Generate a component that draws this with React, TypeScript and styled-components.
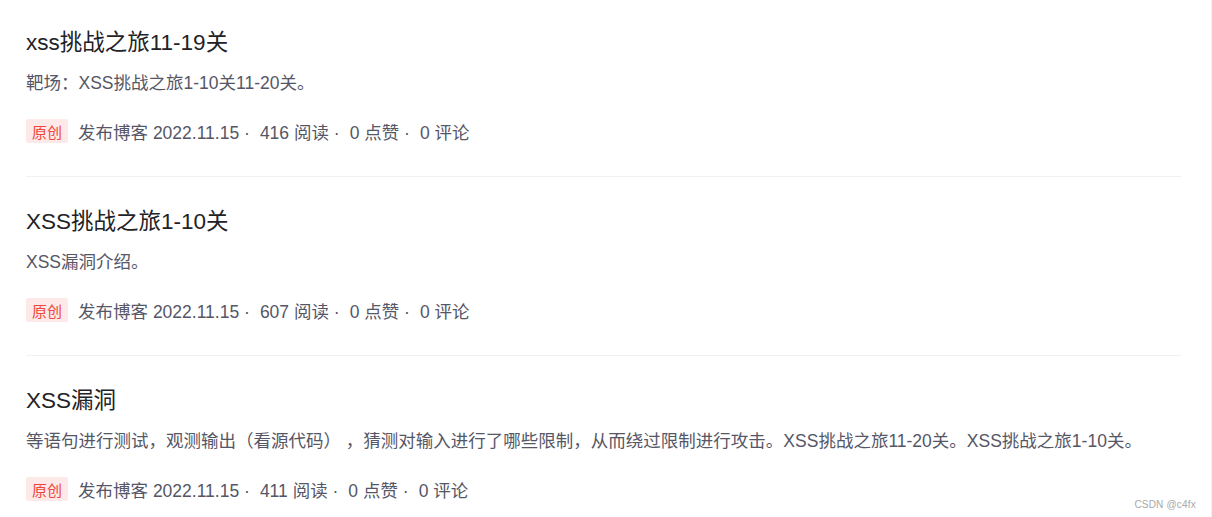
import React from "react";
import styled, { createGlobalStyle } from "styled-components";

const GlobalStyle = createGlobalStyle`
  html, body {
    margin: 0;
    padding: 0;
    background: #fff;
  }
  body {
    font-family: "Liberation Sans", "Noto Sans CJK SC", sans-serif;
  }
`;

const Page = styled.div`
  position: relative;
  box-sizing: border-box;
  width: 1212px;
  height: 517px;
  padding: 0 30px 0 26px;
  border-right: 1px solid #f2f2f2;
  overflow: hidden;
`;

const List = styled.ul`
  list-style: none;
  margin: 0;
  padding: 0;
`;

const Item = styled.li`
  padding: 30px 0 33px;
  border-bottom: 1px solid #f0f0f2;
  &:first-child {
    padding-top: 28px;
  }
  &:last-child {
    border-bottom: none;
  }
`;

const Title = styled.h4`
  margin: 0;
  font-size: 22.5px;
  font-weight: 400;
  line-height: 30px;
  color: #222226;
  white-space: nowrap;
`;

const Desc = styled.p`
  margin: 13px 0 0;
  font-size: 17.5px;
  line-height: 24px;
  color: #555666;
  white-space: nowrap;
  overflow: hidden;
  text-overflow: ellipsis;
`;

const Meta = styled.div`
  display: flex;
  align-items: center;
  margin-top: 24px;
  height: 24px;
  font-size: 17.5px;
  color: #555666;
  white-space: nowrap;
`;

const Badge = styled.span`
  display: inline-flex;
  align-items: center;
  justify-content: center;
  height: 24px;
  padding: 0 6px;
  margin-right: 10px;
  border-radius: 2px;
  background: #fee9e9;
  color: #f0473b;
  font-size: 15px;
`;

const Stat = styled.span`
  margin-right: 10px;
`;

const Watermark = styled.span`
  position: absolute;
  right: 15px;
  bottom: 5px;
  font-size: 10px;
  line-height: 14px;
  color: #a8a8a8;
  letter-spacing: 0.2px;
`;

type Post = {
  title: string;
  desc: string;
  date: string;
  reads: number;
  likes: number;
  comments: number;
};

const posts: Post[] = [
  {
    title: "xss挑战之旅11-19关",
    desc: "靶场：XSS挑战之旅1-10关11-20关。",
    date: "2022.11.15",
    reads: 416,
    likes: 0,
    comments: 0,
  },
  {
    title: "XSS挑战之旅1-10关",
    desc: "XSS漏洞介绍。",
    date: "2022.11.15",
    reads: 607,
    likes: 0,
    comments: 0,
  },
  {
    title: "XSS漏洞",
    desc: "等语句进行测试，观测输出（看源代码） ，猜测对输入进行了哪些限制，从而绕过限制进行攻击。XSS挑战之旅11-20关。XSS挑战之旅1-10关。",
    date: "2022.11.15",
    reads: 411,
    likes: 0,
    comments: 0,
  },
];

const App: React.FC = () => {
  return (
    <>
      <GlobalStyle />
      <Page>
        <List>
          {posts.map((p) => (
            <Item key={p.title}>
              <Title>{p.title}</Title>
              <Desc>{p.desc}</Desc>
              <Meta>
                <Badge>原创</Badge>
                <Stat>发布博客 {p.date} ·</Stat>
                <Stat>{p.reads} 阅读 ·</Stat>
                <Stat>{p.likes} 点赞 ·</Stat>
                <Stat>{p.comments} 评论</Stat>
              </Meta>
            </Item>
          ))}
        </List>
        <Watermark>CSDN @c4fx</Watermark>
      </Page>
    </>
  );
};

export default App;
